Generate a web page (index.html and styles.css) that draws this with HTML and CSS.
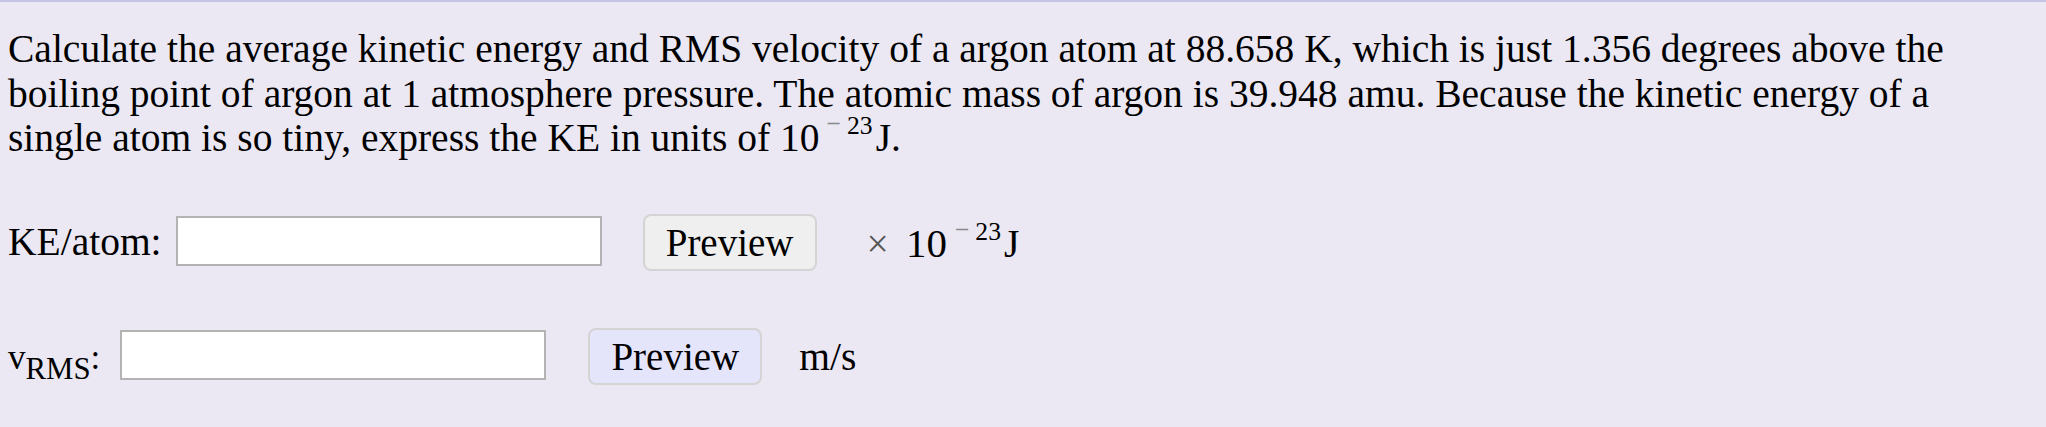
FILE: index.html
```html
<!DOCTYPE html>
<html>
<head>
<meta charset="utf-8">
<link rel="stylesheet" href="styles.css">
</head>
<body>
<div class="top-rule"></div>
<div class="page">
  <p class="question">Calculate the average kinetic energy and RMS velocity of a argon atom at 88.658 K, which is just 1.356 degrees above the boiling point of argon at 1 atmosphere pressure. The atomic mass of argon is 39.948 amu. Because the kinetic energy of a single atom is so tiny, express the KE in units of <span class="pow">10<span class="exp"><span class="minus">−</span>23</span></span>J.</p>
  <div class="row row-ke">
    <label class="label">KE/atom:</label>
    <input class="answer answer-ke" type="text">
    <button class="preview">Preview</button>
    <span class="unit unit-ke"><span class="times">×</span><span class="ten">10</span><span class="exp exp-unit"><span class="minus">−</span>23</span>J</span>
  </div>
  <div class="row row-v">
    <label class="label label-v">v<span class="sub">RMS</span>:</label>
    <input class="answer answer-v" type="text">
    <button class="preview preview-active">Preview</button>
    <span class="unit unit-v">m/s</span>
  </div>
</div>
</body>
</html>
```

FILE: styles.css
```css
html, body {
  margin: 0;
  padding: 0;
  background: #ebe8f3;
}
body {
  font-family: "Liberation Serif", "Times New Roman", serif;
  font-size: 39.5px;
  color: #000;
}
.top-rule {
  height: 2px;
  background: #c6c4e4;
}
.page {
  padding: 0 8px;
}
.question {
  margin: 25px 0 0 0;
  max-width: 1985px;
  line-height: 44.5px;
}
.exp {
  font-size: 0.65em;
  line-height: 0;
  vertical-align: 0.66em;
  margin-left: 7px;
  margin-right: 3px;
}
.minus {
  color: #8a8a8a;
  margin-right: 6px;
  position: relative;
  top: -2px;
}
.row {
  display: flex;
  align-items: center;
  height: 57px;
}
.row-ke {
  margin-top: 53px;
}
.row-v {
  margin-top: 57px;
}
.label {
  margin-right: 14px;
}
.label-v {
  font-size: 35px;
  margin-right: 20px;
  position: relative;
  top: 2px;
}
.sub {
  font-size: 0.88em;
  vertical-align: -10px;
  line-height: 0;
}
.answer {
  box-sizing: border-box;
  width: 426px;
  height: 50px;
  border: 2px solid #b3b3b3;
  background: #fff;
  padding: 0;
  margin: 0;
  position: relative;
  top: -1px;
}
.preview {
  box-sizing: border-box;
  width: 174px;
  height: 57px;
  padding: 0;
  margin: 0 0 0 41px;
  border: 2px solid #d4d4d4;
  border-radius: 8px;
  background: #efefef;
  font-family: "Liberation Serif", "Times New Roman", serif;
  font-size: 39px;
  color: #000;
}
.preview-active {
  background: #e4e4fb;
  margin-left: 42px;
}
.unit {
  position: relative;
  top: 1px;
}
.unit-ke {
  margin-left: 50px;
}
.unit-v {
  margin-left: 37px;
}
.times {
  color: #555;
  margin-right: 17px;
}
.ten {
  font-size: 41px;
}
.exp-unit {
  margin-left: 8px;
  margin-right: 3px;
}
```
